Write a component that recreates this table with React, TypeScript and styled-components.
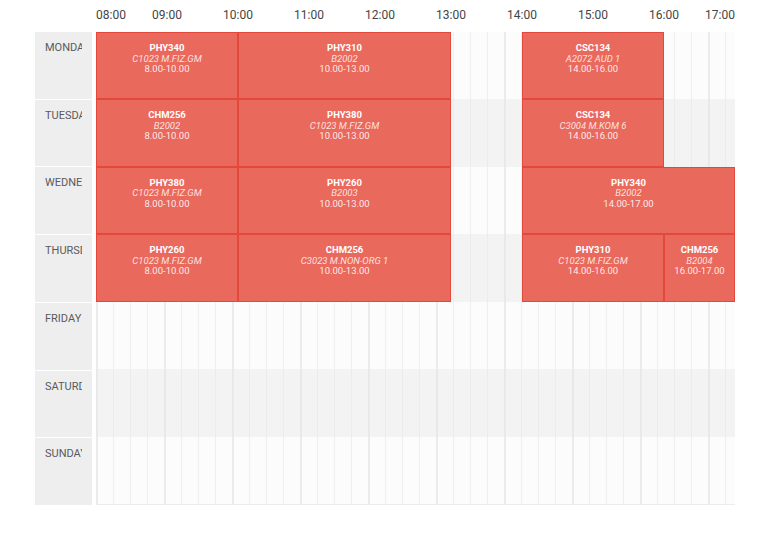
import React from "react";
import styled, { createGlobalStyle } from "styled-components";

const GlobalStyle = createGlobalStyle`
  html, body {
    margin: 0;
    padding: 0;
    background: #ffffff;
  }
  body {
    font-family: Roboto, "Liberation Sans", Arial, sans-serif;
  }
`;

const HOUR = 71;
const START = 8;
const HOURS = ["08:00", "09:00", "10:00", "11:00", "12:00", "13:00", "14:00", "15:00", "16:00", "17:00"];
const DAYS = ["MONDAY", "TUESDAY", "WEDNESDAY", "THURSDAY", "FRIDAY", "SATURDAY", "SUNDAY"];

interface Lesson {
  code: string;
  room: string;
  from: number;
  to: number;
}

const fmt = (h: number) => `${h}.00`;

const SCHEDULE: Lesson[][] = [
  [
    { code: "PHY340", room: "C1023 M.FIZ.GM", from: 8, to: 10 },
    { code: "PHY310", room: "B2002", from: 10, to: 13 },
    { code: "CSC134", room: "A2072 AUD 1", from: 14, to: 16 },
  ],
  [
    { code: "CHM256", room: "B2002", from: 8, to: 10 },
    { code: "PHY380", room: "C1023 M.FIZ.GM", from: 10, to: 13 },
    { code: "CSC134", room: "C3004 M.KOM 6", from: 14, to: 16 },
  ],
  [
    { code: "PHY380", room: "C1023 M.FIZ.GM", from: 8, to: 10 },
    { code: "PHY260", room: "B2003", from: 10, to: 13 },
    { code: "PHY340", room: "B2002", from: 14, to: 17 },
  ],
  [
    { code: "PHY260", room: "C1023 M.FIZ.GM", from: 8, to: 10 },
    { code: "CHM256", room: "C3023 M.NON-ORG 1", from: 10, to: 13 },
    { code: "PHY310", room: "C1023 M.FIZ.GM", from: 14, to: 16 },
    { code: "CHM256", room: "B2004", from: 16, to: 17 },
  ],
  [],
  [],
  [],
];

const Page = styled.div`
  padding-left: 35px;
  width: 700px;
`;

const Header = styled.div`
  display: flex;
  height: 32px;
  align-items: center;
`;

const HeaderSpacer = styled.div`
  width: 61px;
  flex: none;
`;

const TimeAxis = styled.div`
  display: grid;
  grid-template-columns: ${HOUR / 2}px repeat(8, ${HOUR}px) ${HOUR / 2}px;
  font-size: 12px;
  color: #454545;
  padding-bottom: 2px;
`;

const Tick = styled.div<{ $align: "left" | "center" | "right" }>`
  text-align: ${(p) => p.$align};
  white-space: nowrap;
`;

const Body = styled.div`
  display: grid;
  grid-template-columns: 57px ${HOUR * 9}px;
  column-gap: 4px;
  height: 473px;
`;

const DayColumn = styled.div`
  display: grid;
  grid-template-columns: minmax(0, 1fr);
  grid-template-rows: repeat(7, 1fr);
  row-gap: 1px;
  background: #ffffff;
  min-width: 0;
`;

const DayCell = styled.div`
  background: #eeeeee;
  padding: 9px 10px 0;
  min-width: 0;
`;

const DayName = styled.div`
  font-size: 11px;
  line-height: 13px;
  color: #5a5a5a;
  overflow: hidden;
  white-space: nowrap;
`;

const Rows = styled.div`
  display: grid;
  grid-template-rows: repeat(7, 1fr);
  border-bottom: 1px solid #ececec;
`;

const Row = styled.div<{ $shade: boolean }>`
  display: grid;
  grid-template-columns: repeat(9, ${HOUR}px);
  grid-template-rows: 1fr;
  background-color: ${(p) => (p.$shade ? "#f3f3f3" : "#fcfcfc")};
  background-image: repeating-linear-gradient(
      to right,
      ${(p) => (p.$shade ? "#e9e9e9" : "#ebebeb")} 0 2px,
      transparent 2px 68px
    ),
    repeating-linear-gradient(
      to right,
      ${(p) => (p.$shade ? "#ececec" : "#efefef")} 0 1px,
      transparent 1px 17px
    );
`;

const Event = styled.div<{ $start: number; $span: number }>`
  grid-row: 1;
  grid-column: ${(p) => p.$start} / span ${(p) => p.$span};
  box-sizing: border-box;
  background: #ea695d;
  border: 1px solid #e3483c;
  padding-top: 10px;
  text-align: center;
  color: #ffffff;
  font-size: 9.5px;
  line-height: 10.5px;
  overflow: hidden;
`;

const Code = styled.div`
  font-weight: 700;
`;

const Room = styled.div`
  font-style: italic;
  color: rgba(255, 255, 255, 0.82);
`;

const Time = styled.div`
  color: rgba(255, 255, 255, 0.88);
`;

export default function App() {
  return (
    <>
      <GlobalStyle />
      <Page>
        <Header>
          <HeaderSpacer />
          <TimeAxis>
            {HOURS.map((h, i) => (
              <Tick key={h} $align={i === 0 ? "left" : i === HOURS.length - 1 ? "right" : "center"}>
                {h}
              </Tick>
            ))}
          </TimeAxis>
        </Header>
        <Body>
          <DayColumn>
            {DAYS.map((d) => (
              <DayCell key={d}>
                <DayName>{d}</DayName>
              </DayCell>
            ))}
          </DayColumn>
          <Rows>
            {SCHEDULE.map((lessons, i) => (
              <Row key={DAYS[i]} $shade={i % 2 === 1}>
                {lessons.map((l) => (
                  <Event key={l.code + l.from} $start={l.from - START + 1} $span={l.to - l.from}>
                    <Code>{l.code}</Code>
                    <Room>{l.room}</Room>
                    <Time>
                      {fmt(l.from)}-{fmt(l.to)}
                    </Time>
                  </Event>
                ))}
              </Row>
            ))}
          </Rows>
        </Body>
      </Page>
    </>
  );
}
